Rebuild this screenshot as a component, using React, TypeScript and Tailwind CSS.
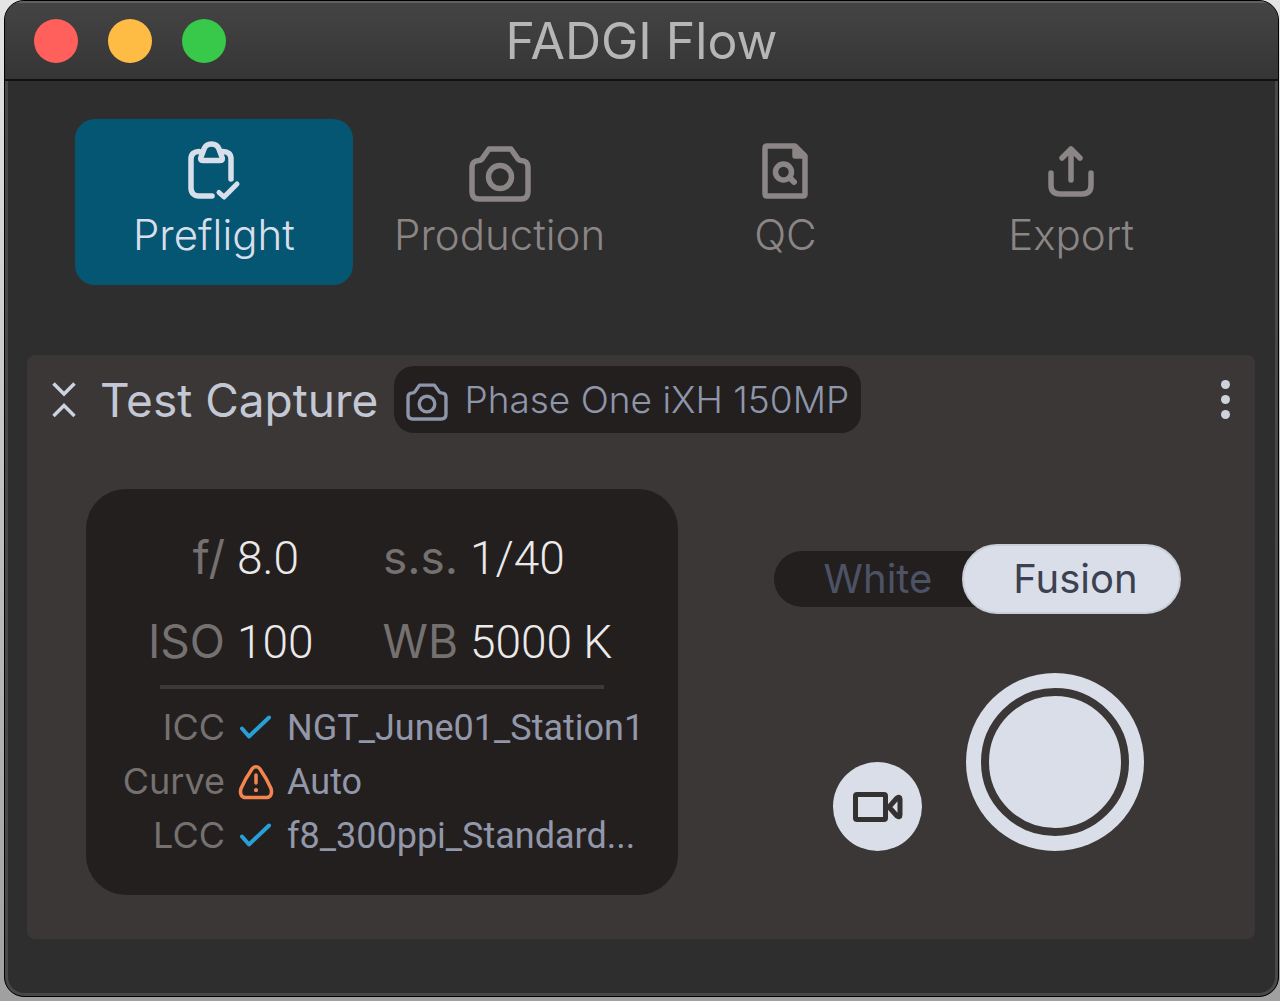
import React, { useState } from 'react';
import clsx from 'clsx';

interface IconProps {
  className?: string;
}

const ClipboardIcon: React.FC<IconProps> = ({ className }) => (
  <svg viewBox="0 0 54 60" fill="none" stroke="currentColor" strokeWidth="5.500" strokeLinecap="round" strokeLinejoin="round" className={className}>
    <path d="M12 10.500C7 10.500 4 13 4 18V47C4 52 7 55 12 55H25M36 10.500C41 10.500 44 13 44 18V38" />
    <path d="M16 19.500H33C35.500 19.500 36 18 35 16L32 8C30.500 4 28 3 24.500 3S18.500 4 17 8L14 16C13 18 13.500 19.500 16 19.500Z" />
    <path d="M32 51.500L37 56L50 43" strokeWidth="5" />
  </svg>
);

const CameraIcon: React.FC<IconProps & { stroke?: number }> = ({ className, stroke = 5.5 }) => (
  <svg viewBox="0 -6 62 62" fill="none" stroke="currentColor" strokeWidth={stroke} strokeLinecap="round" strokeLinejoin="round" className={className}>
    <path d="M20 3H42L49 13C50 14 51 14.500 52 14.500C56.500 14.500 59 17 59 21V46C59 50.500 56.500 53 52 53H10C5.500 53 3 50.500 3 46V21C3 17 5.500 14.500 10 14.500C11 14.500 12 14 13 13Z" />
    <circle cx="31" cy="31" r="11.500" />
  </svg>
);

const FileSearchIcon: React.FC<IconProps> = ({ className }) => (
  <svg viewBox="0 0 46 56" fill="none" stroke="currentColor" strokeWidth="5.500" strokeLinecap="round" strokeLinejoin="round" className={className}>
    <path d="M5 3H33L43 13V51Q43 53 41 53H5Q3 53 3 51V5Q3 3 5 3Z" />
    <path d="M33 4V13H42Z" fill="currentColor" />
    <circle cx="21.500" cy="29" r="8" />
    <path d="M28 35L32 39" strokeWidth="6" />
  </svg>
);

const ExportIcon: React.FC<IconProps> = ({ className }) => (
  <svg viewBox="0 0 46 52" fill="none" stroke="currentColor" strokeWidth="5.500" strokeLinecap="round" strokeLinejoin="round" className={className}>
    <path d="M3 28V40C3 46 6 49 12 49H34C40 49 43 46 43 40V28" />
    <path d="M23 35V4M14 13L23 4L32 13" />
  </svg>
);

const CollapseIcon: React.FC<IconProps> = ({ className }) => (
  <svg viewBox="0 0 24 36" fill="none" stroke="currentColor" strokeWidth="3.500" className={className}>
    <path d="M1.500 1.500L12 12L22.500 1.500M1.500 34L12 23.500L22.500 34" />
  </svg>
);

const CheckIcon: React.FC<IconProps> = ({ className }) => (
  <svg viewBox="0 0 36 36" fill="none" stroke="currentColor" strokeWidth="4" strokeLinecap="round" strokeLinejoin="round" className={className}>
    <path d="M4 18.500L11 26.500L31 7.500" />
  </svg>
);

const WarningIcon: React.FC<IconProps> = ({ className }) => (
  <svg viewBox="0 0 36 36" fill="none" stroke="currentColor" strokeWidth="3.500" strokeLinecap="round" strokeLinejoin="round" className={className}>
    <path d="M14 5C16 2 20 2 22 5C26.500 11.500 30 17.500 33 24.500C34.500 30 32.500 33.500 28 33.500H8C3.500 33.500 1.500 30 3 24.500C6 17.500 9.500 11.500 14 5Z" />
    <path d="M18 11V19" />
    <path d="M18 26V26.200" strokeWidth="4" />
  </svg>
);

const VideoIcon: React.FC<IconProps> = ({ className }) => (
  <svg viewBox="0 0 50 30" fill="none" stroke="currentColor" strokeWidth="5" strokeLinejoin="round" className={className}>
    <rect x="2.500" y="2.500" width="30" height="25" rx="1.500" />
    <path d="M36 15L44 6Q47 4 47 7V23Q47 26 44 24Z" strokeWidth="5" />
  </svg>
);

const tabs = [
  { name: 'Preflight', icon: <ClipboardIcon className="h-[60px] w-[54px]" /> },
  { name: 'Production', icon: <CameraIcon className="size-[62px]" /> },
  { name: 'QC', icon: <FileSearchIcon className="h-14 w-[46px]" /> },
  { name: 'Export', icon: <ExportIcon className="h-[52px] w-[46px]" /> },
];

const exposure = [
  { label: 'f/', value: '8.0' },
  { label: 's.s.', value: '1/40' },
  { label: 'ISO', value: '100' },
  { label: 'WB', value: '5000 K' },
];

const profiles = [
  { label: 'ICC', value: 'NGT_June01_Station1', ok: true },
  { label: 'Curve', value: 'Auto', ok: false },
  { label: 'LCC', value: 'f8_300ppi_Standard...', ok: true },
];

const TitleBar: React.FC = () => (
  <header className="relative flex h-20 items-center justify-center border-t-2 border-b-2 border-t-[#606060] border-b-[#111111] bg-linear-to-b from-[#444444] to-[#353535]">
    <div className="absolute left-[29px] flex gap-[30px]">
      <button aria-label="Close" className="size-11 rounded-full bg-[#ff605c]" />
      <button aria-label="Minimize" className="size-11 rounded-full bg-[#ffbc44]" />
      <button aria-label="Zoom" className="size-11 rounded-full bg-[#38c84a]" />
    </div>
    <h1 className="text-[50px] leading-none text-[#b6b6b6]">FADGI Flow</h1>
  </header>
);

const ExposureCard: React.FC = () => (
  <section className="w-[592px] rounded-[40px] bg-[#231f1e] pt-9 pb-[33px]">
    <dl className="grid grid-cols-[204px_1fr] gap-y-5">
      {exposure.map(({ label, value }, i) => (
        <div
          key={label}
          className={clsx(
            'grid h-16 items-baseline gap-x-3 leading-[64px]',
            i % 2 ? 'grid-cols-[168px_1fr]' : 'grid-cols-[139px_1fr]',
          )}
        >
          <dt className="text-right text-[46px] text-[#757170]">{label}</dt>
          <dd className="font-[Roboto] text-[46px] font-light whitespace-nowrap text-[#ebe9e9]">{value}</dd>
        </div>
      ))}
    </dl>
    <hr className="mx-[74px] mt-3 border-t-4 border-[#3d3938]" />
    <dl className="mt-[11px]">
      {profiles.map(({ label, value, ok }) => (
        <div key={label} className="grid h-[54px] grid-cols-[139px_36px_1fr] items-baseline gap-x-[13px] leading-[54px]">
          <dt className="text-right text-[36px] text-[#757170]">{label}</dt>
          {ok ? (
            <CheckIcon className="size-9 self-center text-[#279fd7]" />
          ) : (
            <WarningIcon className="size-9 self-center text-[#f58550]" />
          )}
          <dd className="font-[Roboto] text-[36px] whitespace-nowrap text-[#9297aa]">{value}</dd>
        </div>
      ))}
    </dl>
  </section>
);

const CaptureControls: React.FC = () => {
  const [mode, setMode] = useState('Fusion');

  return (
    <div className="flex w-[407px] flex-col pt-[55px]">
      <div className="flex h-[70px] items-center">
        <div className="flex h-14 w-full items-center rounded-full bg-[#231f1e]">
          {['White', 'Fusion'].map((name) => (
            <button
              key={name}
              aria-pressed={mode === name}
              onClick={() => setMode(name)}
              className={clsx(
                'text-[40px] leading-none',
                mode === name
                  ? 'h-[70px] w-[219px] rounded-full border-2 border-[#c9cdd8] bg-[#d9dee8] pl-2 text-[#3b4150]'
                  : 'h-14 flex-1 pl-5 text-[#4d5366]',
              )}
            >
              {name}
            </button>
          ))}
        </div>
      </div>
      <div className="mt-[59px] flex items-end justify-end gap-11 pr-[37px]">
        <button aria-label="Live view" className="flex size-[89px] items-center justify-center rounded-full bg-[#d9dee8] text-[#343131]">
          <VideoIcon className="h-[30px] w-[50px]" />
        </button>
        <button aria-label="Capture" className="size-[178px] rounded-full bg-[#d9dee8] p-[15px]">
          <span className="block size-full rounded-full border-8 border-[#3b3736]" />
        </button>
      </div>
    </div>
  );
};

export default function App() {
  const [active, setActive] = useState('Preflight');

  return (
    <div className="flex min-h-screen bg-linear-to-b from-[#e4e4e4] to-[#a0a0a0] pr-px pb-1 pl-1 font-[Inter,sans-serif]">
      <div className="flex flex-1 flex-col overflow-hidden rounded-[20px] border border-black bg-[#2e2e2e] inset-ring-3 inset-ring-[#484848]">
        <TitleBar />
        <nav className="grid grid-cols-4 gap-2 pt-[38px] pr-[68px] pl-[70px]">
          {tabs.map(({ name, icon }) => (
            <button
              key={name}
              onClick={() => setActive(name)}
              className={clsx(
                'flex h-[166px] flex-col items-center rounded-[20px] pt-5',
                active === name ? 'bg-[#055673] text-[#d9dfea]' : 'text-[#8b8585]',
              )}
            >
              <span className="flex h-16 items-center">{icon}</span>
              <span className="text-[42px] leading-[64px] font-light">{name}</span>
            </button>
          ))}
        </nav>
        <main className="mt-[70px] mr-[23px] mb-[57px] ml-[22px] flex-1 rounded-lg bg-[#3b3736] pt-[11px]">
          <header className="flex items-center px-[25px]">
            <button aria-label="Collapse">
              <CollapseIcon className="h-9 w-6 text-[#cdd2de]" />
            </button>
            <h2 className="ml-6 text-[46px] leading-none text-[#c4c8d4]">Test Capture</h2>
            <div className="ml-4 flex h-[67px] items-center rounded-[20px] bg-[#231f1e] px-3 text-[#8d96ab]">
              <CameraIcon stroke={5} className="size-[42px]" />
              <span className="ml-4 text-[37px] leading-none font-light">Phase One iXH 150MP</span>
            </div>
            <button aria-label="More options" className="ml-auto flex flex-col gap-[6px] text-[#cdd2de]">
              <span className="size-[9px] rounded-full bg-current" />
              <span className="size-[9px] rounded-full bg-current" />
              <span className="size-[9px] rounded-full bg-current" />
            </button>
          </header>
          <div className="mt-14 flex justify-between pr-[74px] pb-11 pl-[59px]">
            <ExposureCard />
            <CaptureControls />
          </div>
        </main>
      </div>
    </div>
  );
}
